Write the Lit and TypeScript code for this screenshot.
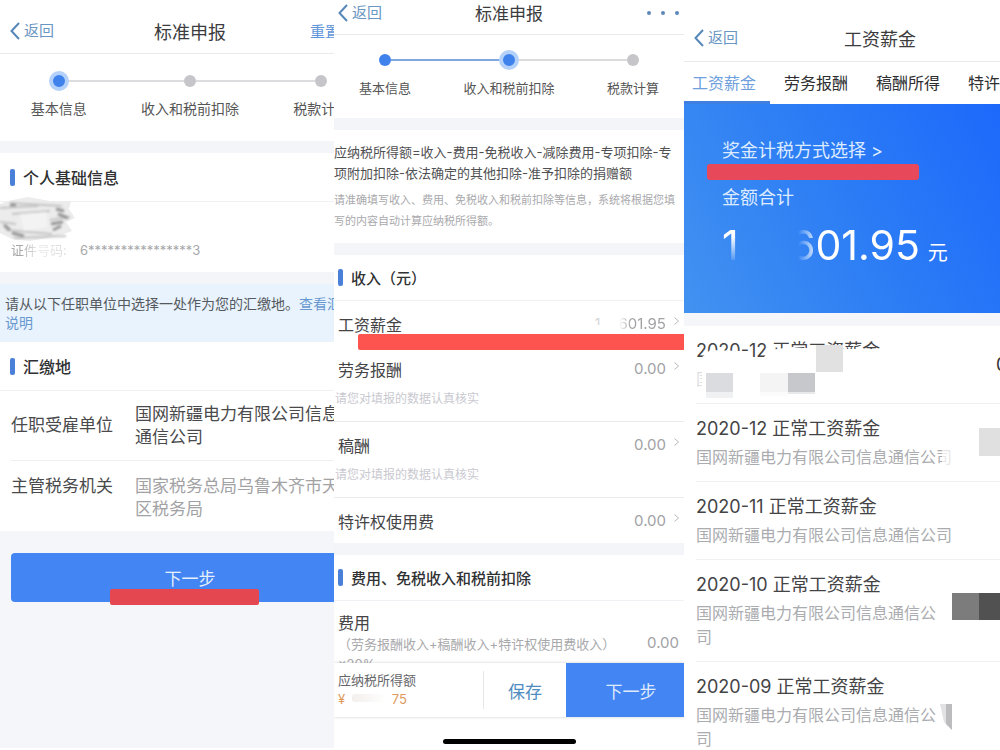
import { LitElement, html, css, svg, nothing } from "lit";
import { customElement, property } from "lit/decorators.js";
import { classMap } from "lit/directives/class-map.js";

const base = css`
  * {
    box-sizing: border-box;
  }
  button,
  a {
    font: inherit;
    color: inherit;
    text-decoration: none;
    background: none;
    border: 0;
    padding: 0;
    margin: 0;
    text-align: inherit;
  }
  h1,
  h2,
  p,
  ul,
  ol,
  dl,
  dd {
    margin: 0;
    padding: 0;
    font: inherit;
    list-style: none;
  }
`;

const section = css`
  .band {
    height: 12px;
    background: #f3f5f9;
  }
  .section {
    display: flex;
    align-items: center;
    height: 49px;
    padding-left: 10px;
    gap: 8px;
    font-size: 16px;
    font-weight: 500;
    color: #303133;
    border-bottom: 1px solid #eff1f4;
  }
  .section::before {
    content: "";
    width: 5px;
    height: 17px;
    border-radius: 2px;
    background: #4a80d8;
  }
`;

@customElement("nav-header")
class NavHeader extends LitElement {
  @property() heading = "";
  static styles = [
    base,
    css`
      :host {
        display: grid;
        grid-template-columns: 1fr auto 1fr;
        align-items: center;
        height: 54px;
        padding: 8px 10px 0;
        font-size: 18px;
        color: #3c3c3e;
        border-bottom: 1px solid #e9eaec;
      }
      :host([compact]) {
        height: 35px;
        padding: 0 4px 10px;
        font-size: 17px;
      }
      :host([tall]) {
        height: 62px;
        padding-top: 14px;
      }
      .start {
        display: flex;
      }
      .back {
        display: flex;
        align-items: center;
        gap: 4px;
        font-size: 15px;
        line-height: 20px;
        color: #6a96c2;
      }
      .back svg {
        width: 10px;
        height: 18px;
        fill: none;
        stroke: #5587b8;
        stroke-width: 2;
      }
      .end {
        justify-self: end;
        font-size: 15px;
        color: #5e95da;
      }
    `,
  ];
  render() {
    return html`
      <div class="start">
        <button class="back">
          <svg viewBox="0 0 10 18" aria-hidden="true"><path d="M9 1 1.5 9 9 17" /></svg>返回
        </button>
      </div>
      <h1>${this.heading}</h1>
      <div class="end"><slot></slot></div>
    `;
  }
}

@customElement("step-bar")
class StepBar extends LitElement {
  @property({ type: Number }) current = 0;
  static styles = [
    base,
    css`
      :host {
        display: block;
      }
      .steps {
        display: grid;
        grid-template-columns: repeat(3, 1fr);
      }
      .step {
        display: grid;
        justify-items: center;
        gap: 8px;
        white-space: nowrap;
        line-height: 20px;
      }
      .rail {
        display: grid;
        grid-template-columns: 1fr 20px 1fr;
        align-items: center;
        width: 100%;
        height: 20px;
      }
      .rail::before,
      .rail::after {
        content: "";
        height: 2px;
        margin: 0 -4px;
        background: #dcdcde;
      }
      .step:first-child .rail::before,
      .step:last-child .rail::after,
      .done + .step .rail::before,
      .done .rail::after {
        background: #7fa9e0;
      }
      .step:first-child .rail::before,
      .step:last-child .rail::after {
        background: none;
      }
      .dot {
        z-index: 1;
        justify-self: center;
        width: 12px;
        height: 12px;
        border-radius: 50%;
        background: #c6c6ca;
      }
      .done .dot {
        background: #3f82ec;
      }
      .active .dot {
        width: 20px;
        height: 20px;
        border: 4px solid #b4d1fa;
        background: #3f82ec;
      }
    `,
  ];
  render() {
    return html`<ol class="steps">
      ${["基本信息", "收入和税前扣除", "税款计算"].map(
        (name, i) => html`<li
          class=${classMap({ step: true, done: i < this.current, active: i === this.current })}
        >
          <span class="rail"><i class="dot"></i></span><span>${name}</span>
        </li>`
      )}
    </ol>`;
  }
}

@customElement("basic-screen")
class BasicScreen extends LitElement {
  static styles = [
    base,
    section,
    css`
      :host {
        display: block;
        position: relative;
        overflow: hidden;
        background: #fff;
      }
      .page {
        display: flex;
        flex-direction: column;
        width: calc(100% + 46px);
        height: calc(100% - 2px);
        background: #f4f6fa;
      }
      .white {
        background: #fff;
      }
      .steps {
        height: 87px;
        margin: 0 -7px;
        padding-top: 17px;
        font-size: 14px;
        color: #555;
      }
      .identity {
        position: relative;
        height: 70px;
        padding: 38px 11px 0;
        font-size: 13px;
        line-height: 20px;
        color: #a8a8aa;
        white-space: nowrap;
      }
      .label {
        display: inline-block;
        width: 69px;
        overflow: hidden;
        vertical-align: top;
        mask-image: linear-gradient(90deg, #000 0 15%, #0003 40%, #0008 100%);
      }
      .scribble {
        position: absolute;
        left: 0;
        top: -8px;
        width: 80px;
        height: 56px;
      }
      .notice {
        padding: 10px 5px;
        font-size: 14px;
        line-height: 19px;
        color: #555a60;
        background: #e9f3fd;
      }
      .notice a {
        color: #6798cf;
      }
      .info {
        display: grid;
        grid-template-columns: 124px 1fr;
        align-items: center;
        margin-left: 11px;
        height: 70px;
        font-size: 17px;
        line-height: 23px;
        color: #4a4a4c;
        border-bottom: 1px solid #eff0f2;
      }
      .office {
        align-items: start;
        padding-top: 14px;
        border: 0;
      }
      .office dd {
        color: #a2a2a5;
      }
      .next {
        margin: 22px 11px 0;
        height: 49px;
        border-radius: 4px;
        font-size: 17px;
        text-align: center;
        color: #e6effc;
        background: #4285f3;
      }
      .mark {
        position: absolute;
        left: 110px;
        top: 589px;
        width: 149px;
        height: 16px;
        border-radius: 2px;
        background: #e4474f;
      }
    `,
  ];
  render() {
    return html`
      <div class="page">
        <nav-header class="white" heading="标准申报"><button>重置申报</button></nav-header>
        <div class="white"><step-bar class="steps"></step-bar></div>
        <div class="band"></div>
        <div class="white">
          <h2 class="section">个人基础信息</h2>
          <div class="identity">
            <span class="label">证件号码:</span><span>6****************3</span>
            <svg class="scribble" viewBox="0 0 80 56" fill="none" aria-hidden="true">
              <defs>
                <filter id="soft"><feGaussianBlur stdDeviation="1.1" /></filter>
              </defs>
              <path d="M0 10 8 7 28 3 50 7 71 7 69 15 75 24 66 28 72 37 58 42 30 47 12 45 0 39Z" fill="#ececec" />
              <g filter="url(#soft)">
                <path d="M10 9 62 12M0 14 38 12M12 20 50 17M0 28 16 30M50 26 70 23M6 36 52 40M14 44 66 42" stroke="#c4c4c4" stroke-width="2" />
                <path d="M10 11h6M58 20l10 4M51 30l12-2M53 36l8-4M12 39l12 3M4 31l6 5M56 15l8 2" stroke="#989898" stroke-width="3" />
                <path d="M20 20 46 18 48 33 24 37Z" fill="#f3f3f3" />
              </g>
            </svg>
          </div>
        </div>
        <div class="band"></div>
        <p class="notice">
          请从以下任职单位中选择一处作为您的汇缴地。<a href="#">查看汇缴地说明</a>
        </p>
        <div class="white">
          <h2 class="section">汇缴地</h2>
          <dl>
            <div class="info">
              <dt>任职受雇单位</dt>
              <dd>国网新疆电力有限公司信息<br />通信公司</dd>
            </div>
            <div class="info office">
              <dt>主管税务机关</dt>
              <dd>国家税务总局乌鲁木齐市天山<br />区税务局</dd>
            </div>
          </dl>
        </div>
        <button class="next">下一步</button>
      </div>
      <div class="mark"></div>
    `;
  }
}

interface Income {
  name: string;
  value: string;
  hint?: string;
  hidden?: boolean;
}

const incomes: Income[] = [
  { name: "工资薪金", value: "601.95", hidden: true },
  { name: "劳务报酬", value: "0.00", hint: "请您对填报的数据认真核实" },
  { name: "稿酬", value: "0.00", hint: "请您对填报的数据认真核实" },
  { name: "特许权使用费", value: "0.00" },
];

@customElement("income-screen")
class IncomeScreen extends LitElement {
  static styles = [
    base,
    section,
    css`
      :host {
        display: flex;
        flex-direction: column;
        position: relative;
        overflow: hidden;
        background: #fff;
      }
      .scroll {
        flex: 1;
        min-height: 0;
        overflow: hidden;
      }
      .dots {
        display: flex;
        gap: 10px;
        padding: 4px 1px;
      }
      .dots i {
        width: 4px;
        height: 4px;
        border-radius: 50%;
        background: #5c87b8;
      }
      .steps {
        height: 83px;
        margin: 0 -11px;
        padding-top: 15px;
        font-size: 13px;
        color: #555;
      }
      .intro {
        padding: 12px 2px 11px 0;
      }
      .formula {
        font-size: 13px;
        line-height: 21px;
        color: #505052;
      }
      .tip {
        margin-top: 6px;
        font-size: 11px;
        line-height: 21px;
        color: #a9a9ac;
      }
      .section {
        height: 46px;
        padding-left: 4px;
        font-size: 15px;
      }
      .item {
        border-bottom: 1px solid #eaebed;
      }
      .item:first-child,
      .item:last-child {
        border: 0;
      }
      .row {
        display: flex;
        align-items: center;
        width: 100%;
        height: 45px;
        padding: 0 5px 0 4px;
        font-size: 16px;
        color: #444446;
      }
      .value {
        margin-left: auto;
        font-size: 15px;
        color: #a2a2a6;
      }
      .hidden {
        mask-image: linear-gradient(90deg, #0001 2px, #000 13px);
      }
      .ghost {
        height: 8px;
        margin: 0 18px 6px auto;
        overflow: hidden;
        font-size: 14px;
        line-height: 14px;
        color: #d5d5d8;
      }
      .ghost + .value {
        margin-left: 0;
      }
      .chevron {
        width: 5px;
        height: 8px;
        margin: 0 0 5px 8px;
        fill: none;
        stroke: #b8b8bc;
      }
      .hint {
        padding: 0 1px 14px;
        font-size: 12px;
        line-height: 16px;
        color: #c9c9d0;
      }
      .cost {
        display: grid;
        grid-template-columns: 284px auto;
        justify-content: space-between;
        align-items: center;
        padding: 11px 5px 0 4px;
        font-size: 16px;
        line-height: 22px;
        color: #444446;
      }
      .detail {
        font-size: 13px;
        line-height: 20px;
        color: #a9a9ac;
      }
      .footer {
        display: grid;
        grid-template-columns: 150px 1fr 118px;
        align-items: center;
        height: 54px;
        background: #fff;
        box-shadow: 0 0 3px #0003;
      }
      .total {
        padding-left: 4px;
        font-size: 13px;
        line-height: 19px;
        color: #66666a;
        border-right: 1px solid #e6e6e8;
      }
      .sum {
        display: flex;
        justify-content: space-between;
        width: 69px;
        color: #e09a5c;
      }
      .erased {
        width: 34px;
        height: 8px;
        margin-top: 4px;
        border-radius: 3px;
        background: linear-gradient(90deg, #f3efec, #fff);
      }
      .save,
      .next {
        height: 100%;
        font-size: 17px;
        text-align: center;
        color: #4e8cc0;
      }
      .next {
        padding-left: 12px;
        color: #dfeafb;
        background: #4285f3;
      }
      .home {
        display: grid;
        place-items: center;
        height: 33px;
        padding-top: 16px;
      }
      .home i {
        width: 133px;
        height: 5px;
        border-radius: 3px;
        background: #000;
      }
      .mark {
        position: absolute;
        left: 24px;
        right: 0;
        top: 334px;
        height: 16px;
        background: #fd5450;
        border-radius: 2px 0 0 2px;
      }
    `,
  ];
  render() {
    return html`
      <nav-header compact heading="标准申报"
        ><button class="dots" aria-label="更多"><i></i><i></i><i></i></button
      ></nav-header>
      <div class="scroll">
        <step-bar class="steps" .current=${1}></step-bar>
        <div class="band"></div>
        <div class="intro">
          <p class="formula">
            应纳税所得额=收入-费用-免税收入-减除费用-专项扣除-专项附加扣除-依法确定的其他扣除-准予扣除的捐赠额
          </p>
          <p class="tip">
            请准确填写收入、费用、免税收入和税前扣除等信息，系统将根据您填写的内容自动计算应纳税所得额。
          </p>
        </div>
        <div class="band"></div>
        <h2 class="section">收入（元）</h2>
        <ul>
          ${incomes.map(
            (r) => html`<li class="item">
              <button class="row">
                <span>${r.name}</span>
                ${r.hidden ? html`<span class="ghost">1</span>` : nothing}
                <span class=${classMap({ value: true, hidden: !!r.hidden })}>${r.value}</span>
                <svg class="chevron" viewBox="0 0 5 8" aria-hidden="true"><path d="M.5.5 4.500 4 .5 7.500" /></svg>
              </button>
              ${r.hint ? html`<p class="hint">${r.hint}</p>` : nothing}
            </li>`
          )}
        </ul>
        <div class="band"></div>
        <h2 class="section">费用、免税收入和税前扣除</h2>
        <div class="cost">
          <div>
            费用
            <p class="detail">（劳务报酬收入+稿酬收入+特许权使用费收入）×20%</p>
          </div>
          <span class="value">0.00</span>
        </div>
      </div>
      <div class="footer">
        <div class="total">
          应纳税所得额
          <div class="sum"><span>¥</span><i class="erased"></i><span>75</span></div>
        </div>
        <button class="save">保存</button>
        <button class="next">下一步</button>
      </div>
      <div class="home"><i></i></div>
      <div class="mark"></div>
    `;
  }
}

const months = ["2020-12", "2020-12", "2020-11", "2020-10", "2020-09"];

const patches = [
  svg`<path d="M10 28 14 24 44 25 48 31H68L74 24 96 21 120 23H200L290 30V76H6V31Z" fill="#fff"/>
    <path d="M0 36h6v40H0Z" fill="#fff" opacity=".6"/>
    <path d="M120 19h27v27h-27Z" fill="#e1e1e2"/><path d="M10 47h27v25H10Z" fill="#dadce0"/>
    <path d="M64 47h28v23H64Z" fill="#f4f4f5"/><path d="M92 47h27v21H92Z" fill="#c6c8cc"/>
    <path d="M10 66h109v8H10Z" fill="#fff" opacity=".6"/>`,
  svg`<path d="M246 42h24v28h-24Z" fill="#fff" opacity=".7"/><path d="M283 24h60v28h-60Z" fill="#e0e0e1"/>`,
  nothing,
  svg`<path d="M256 33h27v27h-27Z" fill="#7c7c7d"/><path d="M283 33h60v27h-60Z" fill="#515152"/>`,
  svg`<path d="M244 42h12v26l-8-8Z" fill="#e2e2e4"/><path d="M250 42h6v26l-6-6Z" fill="#bcbcbe"/>`,
];

@customElement("salary-screen")
class SalaryScreen extends LitElement {
  static styles = [
    base,
    css`
      :host {
        display: block;
        position: relative;
        overflow: hidden;
        background: #fff;
      }
      .head {
        width: calc(100% + 76px);
      }
      .tabs {
        display: flex;
        margin-left: -6px;
        height: 42px;
        font-size: 16px;
        color: #2e2e30;
        white-space: nowrap;
      }
      .tab {
        flex: none;
        padding: 0 14px;
        border-bottom: 3px solid transparent;
      }
      .on {
        color: #6f9fdc;
        border-color: #3f7fe0;
      }
      .card {
        height: 209px;
        padding: 34px 38px 0;
        font-size: 18px;
        line-height: 26px;
        color: #dcebff;
        background: linear-gradient(60deg, #4292f1, #2d7df5 50%, #1d69fb);
      }
      .sum {
        margin-top: 21px;
      }
      .amount {
        display: flex;
        align-items: baseline;
        margin-top: 8px;
        font-size: 41px;
        line-height: 52px;
        color: #fff;
      }
      .first {
        width: 68px;
        mask-image: linear-gradient(165deg, #000 20px, #0000 46px);
      }
      .rest {
        mask-image: linear-gradient(90deg, #0000 8px, #000a 22px, #000 26px);
      }
      .unit {
        margin-left: 8px;
        font-size: 20px;
      }
      .space {
        height: 13px;
        background: #f5f6fa;
      }
      .list {
        margin-left: 12px;
      }
      .item {
        position: relative;
        padding: 12px 40px 12px 0;
        border-bottom: 1px solid #f0f0f2;
      }
      .item:nth-child(n + 4) {
        padding-right: 52px;
      }
      .title {
        font-size: 18px;
        line-height: 26px;
        color: #444446;
      }
      .company {
        margin-top: 3px;
        font-size: 16px;
        line-height: 24px;
        color: #abacb0;
      }
      .patch {
        position: absolute;
        left: 0;
        top: 0;
        width: 100%;
        height: 100%;
        overflow: hidden;
      }
      .edge {
        position: absolute;
        left: 300px;
        top: 26px;
        font-size: 18px;
        line-height: 26px;
        color: #333;
      }
      .mark {
        position: absolute;
        left: 23px;
        top: 164px;
        width: 212px;
        height: 16px;
        border-radius: 3px;
        background: #e8495a;
      }
    `,
  ];
  render() {
    return html`
      <nav-header class="head" tall heading="工资薪金"></nav-header>
      <nav class="tabs">
        ${["工资薪金", "劳务报酬", "稿酬所得", "特许权使用费"].map(
          (t, i) => html`<button class=${classMap({ tab: true, on: i === 0 })}>${t}</button>`
        )}
      </nav>
      <div class="card">
        <a href="#">奖金计税方式选择 &gt;</a>
        <p class="sum">金额合计</p>
        <p class="amount">
          <span class="first">1</span><span class="rest">601.95</span><span class="unit">元</span>
        </p>
      </div>
      <div class="space"></div>
      <ul class="list">
        ${months.map(
          (m, i) => html`<li class="item">
            <p class="title">${m} 正常工资薪金</p>
            <p class="company">国网新疆电力有限公司信息通信公司</p>
            <svg class="patch" aria-hidden="true">${patches[i]}</svg>
            ${i === 0 ? html`<span class="edge">0</span>` : nothing}
          </li>`
        )}
      </ul>
      <div class="mark"></div>
    `;
  }
}

@customElement("app-root")
class AppRoot extends LitElement {
  static styles = css`
    :host {
      display: grid;
      grid-template-columns: 334fr 350fr 316fr;
      height: 100vh;
      overflow: hidden;
      background: #fff;
      font-family: Inter, "Noto Sans CJK SC", sans-serif;
    }
    :host > * {
      min-width: 0;
    }
  `;
  render() {
    return html`
      <basic-screen></basic-screen>
      <income-screen></income-screen>
      <salary-screen></salary-screen>
    `;
  }
}
